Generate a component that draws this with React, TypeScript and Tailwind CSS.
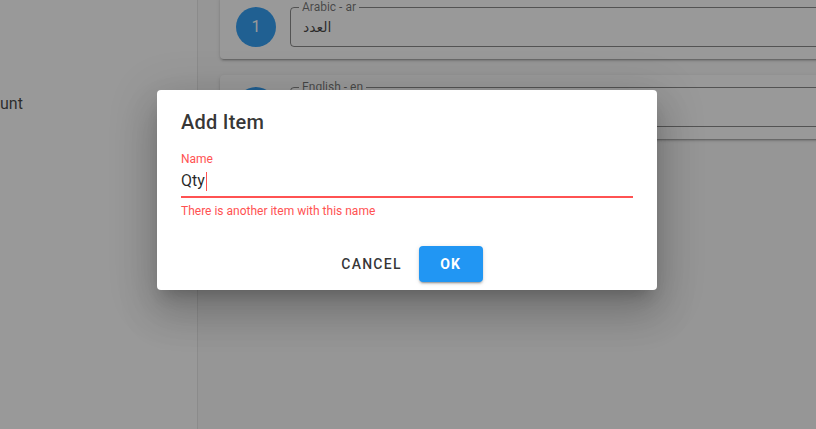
import React from "react";

const cards = [
  { n: 1, label: "Arabic - ar", value: "العدد" },
  { n: 2, label: "English - en", value: "Qty" },
];

function LangCard({ n, label, value }: { n: number; label: string; value: string }) {
  return (
    <div className="flex h-16 w-[640px] shrink-0 items-center gap-[14px] rounded-[4px] bg-white px-4 shadow-[0_3px_1px_-2px_rgba(0,0,0,0.2),0_2px_2px_0_rgba(0,0,0,0.14),0_1px_5px_0_rgba(0,0,0,0.12)]">
      <div className="flex h-10 w-10 shrink-0 items-center justify-center rounded-full bg-[#2196f3] text-[16px] text-white">
        {n}
      </div>
      <div className="relative h-10 flex-1 rounded-[4px] border border-black/50">
        <span className="absolute -top-[8px] left-[8px] bg-white px-[3px] text-[12px] leading-[14px] text-black/60">
          {label}
        </span>
        <div className="pl-3 pt-[9px] text-[14px] leading-5 text-black/80" style={{ fontFamily: "'DejaVu Sans', sans-serif" }}>
          {value}
        </div>
      </div>
    </div>
  );
}

export default function App() {
  return (
    <div className="relative h-[429px] w-[816px] overflow-hidden font-['Roboto',sans-serif]">
      {/* page underneath */}
      <div className="flex h-full">
        <aside className="w-[198px] shrink-0 border-r border-black/10 bg-white pt-[92px]">
          <div className="text-[16px] leading-6 text-black/80">unt</div>
        </aside>
        <main className="flex flex-1 flex-col gap-4 overflow-hidden bg-[#fafafa] pl-[22px] -mt-[5px]">
          {cards.map((c) => (
            <LangCard key={c.n} n={c.n} label={c.label} value={c.value} />
          ))}
        </main>
      </div>

      {/* overlay + dialog */}
      <div className="absolute inset-0 flex justify-center bg-[rgba(33,33,33,0.46)] pr-[2px] pt-[90px]">
        <div className="h-[200px] w-[500px] rounded-[4px] bg-white shadow-[0_11px_15px_-7px_rgba(0,0,0,0.2),0_24px_38px_3px_rgba(0,0,0,0.14),0_9px_46px_8px_rgba(0,0,0,0.12)]">
          <h2 className="px-6 pt-4 text-[20px] font-medium leading-8 tracking-[0.0125em] text-black/80">
            Add Item
          </h2>
          <div className="px-6 pt-[13px]">
            <div className="text-[12px] leading-4 text-[#ff5252]">Name</div>
            <div className="mt-1 flex items-center border-b-2 border-[#ff5252] pb-[5px] text-[16px] leading-5 text-black/85">
              <span>Qty</span>
              <span className="ml-px inline-block h-[19px] w-px bg-[#ff5252]" />
            </div>
            <div className="mt-[7px] text-[12px] leading-3 text-[#ff5252]">There is another item with this name</div>
          </div>
          <div className="mt-[29px] flex justify-center gap-[9px] pl-[2px]">
            <button className="h-9 rounded-[4px] px-2 text-[14px] font-medium uppercase tracking-[0.0892em] text-black/80">
              Cancel
            </button>
            <button className="h-9 w-16 rounded-[4px] bg-[#2196f3] text-[14px] font-bold uppercase tracking-[0.0892em] text-white shadow-[0_3px_1px_-2px_rgba(0,0,0,0.2),0_2px_2px_0_rgba(0,0,0,0.14),0_1px_5px_0_rgba(0,0,0,0.12)]">
              OK
            </button>
          </div>
        </div>
      </div>
    </div>
  );
}
